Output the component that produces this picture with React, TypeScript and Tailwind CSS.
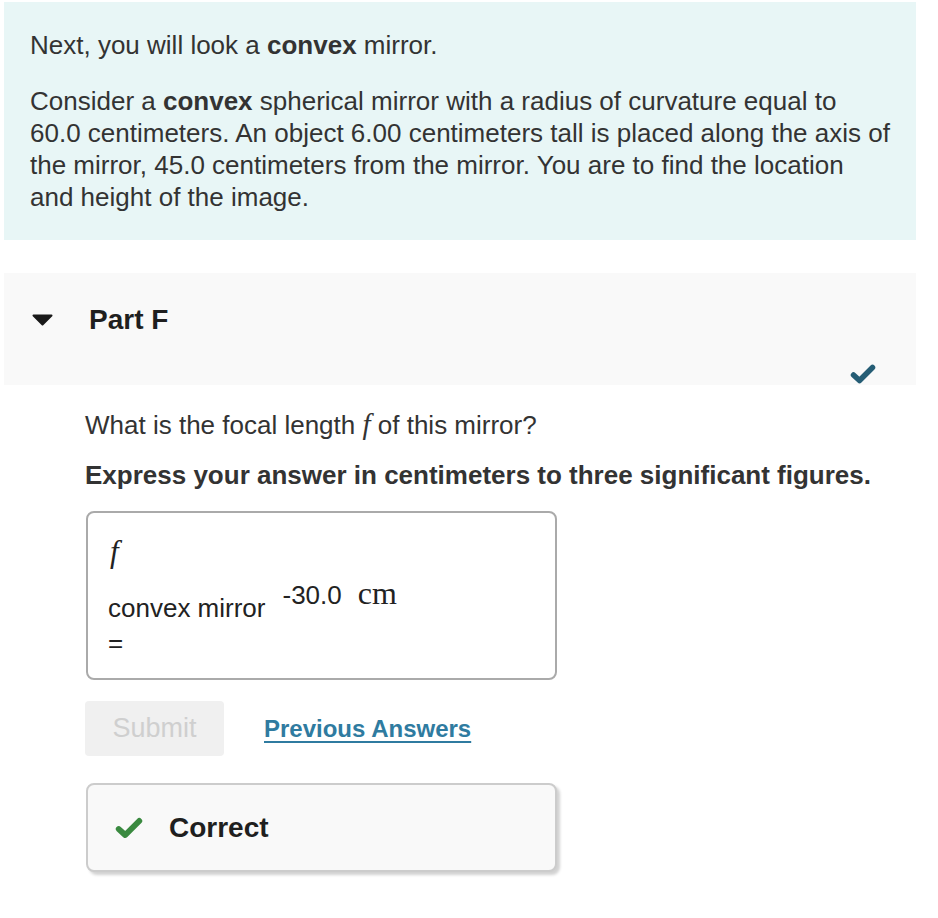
import React from 'react';

const sans = { fontFamily: '"Liberation Sans", Arial, sans-serif' };
const serif = { fontFamily: '"Liberation Serif", "Times New Roman", serif' };

const Triangle = () => (
    <svg width="21" height="12" viewBox="0 0 21 12" className="shrink-0">
        <path d="M1.5 1.5 H19.5 L10.5 10.5 Z" fill="#1a1a1a" stroke="#1a1a1a" strokeWidth="2" strokeLinejoin="round" />
    </svg>
);

const Check = ({ color, className }: { color: string; className?: string }) => (
    <svg viewBox="0 0 26 20" className={className}>
        <path d="M3.5 11 L9.5 16.5 L22.5 3.5" fill="none" stroke={color} strokeWidth="5.5" strokeLinecap="round" strokeLinejoin="round" />
    </svg>
);

export default function App() {
    return (
        <div className="bg-white w-[938px] min-h-[918px] pt-[2px] pl-[4px] text-[#333]" style={sans}>
            {/* intro */}
            <div className="w-[912px] bg-[#e8f6f6] px-[26px] py-[27px] text-[26px] leading-[32px]">
                <p>Next, you will look a <b>convex</b> mirror.</p>
                <p className="mt-[24px]">
                    Consider a <b>convex</b> spherical mirror with a radius of curvature equal to<br />
                    60.0 centimeters. An object 6.00 centimeters tall is placed along the axis of<br />
                    the mirror, 45.0 centimeters from the mirror. You are to find the location<br />
                    and height of the image.
                </p>
            </div>

            {/* part header */}
            <div className="mt-[33px] w-[912px] h-[112px] bg-[#f9f9f9] relative pt-[31px] pl-[28px]">
                <div className="flex items-center gap-[36px] h-[32px]">
                    <Triangle />
                    <span className="text-[28px] leading-[32px] font-bold text-[#1f1f1f]">Part F</span>
                </div>
                <Check color="#255d75" className="absolute right-[40px] bottom-[1px] w-[26px] h-[20px]" />
            </div>

            {/* question */}
            <div className="pl-[81px] pt-[23px]">
                <p className="text-[26px] leading-[32px]">
                    What is the focal length <i style={serif} className="text-[29px]">f</i> of this mirror?
                </p>
                <p className="mt-[18px] text-[26px] leading-[32px] font-bold">
                    Express your answer in centimeters to three significant figures.
                </p>

                <div className="mt-[20px] ml-[1px] w-[471px] h-[169px] border-2 border-[#aaa] rounded-[8px] pl-[20px] pt-[22px] flex items-start text-[#222]">
                    <div className="flex flex-col">
                        <i className="text-[31px] leading-[34px] pl-[2px]" style={serif}>f</i>
                        <span className="mt-[22px] text-[26px] leading-[35px]">convex mirror</span>
                        <span className="text-[26px] leading-[35px]">=</span>
                    </div>
                    <div className="ml-[17px] mt-[42px] flex items-baseline gap-[16px]">
                        <span className="text-[26px] leading-[32px]">-30.0</span>
                        <span className="text-[32px] leading-[32px]" style={serif}>cm</span>
                    </div>
                </div>

                <div className="mt-[21px] flex items-center gap-[40px]">
                    <button className="w-[139px] h-[55px] rounded-[4px] bg-[#f0f0f0] text-[#cfcfcf] text-[27px]">Submit</button>
                    <a href="#" className="text-[24px] font-bold text-[#2f7ba0] underline underline-offset-[4px] decoration-[2px]">Previous Answers</a>
                </div>

                <div className="mt-[27px] ml-[1px] w-[471px] h-[89px] border-2 border-[#ccc] rounded-[8px] bg-[#f9f9f9] shadow-[3px_3px_3px_rgba(0,0,0,0.18)] flex items-center pl-[27px] gap-[26px]">
                    <Check color="#3a8a40" className="w-[28px] h-[22px]" />
                    <span className="text-[28px] font-bold text-[#1f1f1f]">Correct</span>
                </div>
            </div>
        </div>
    );
}
